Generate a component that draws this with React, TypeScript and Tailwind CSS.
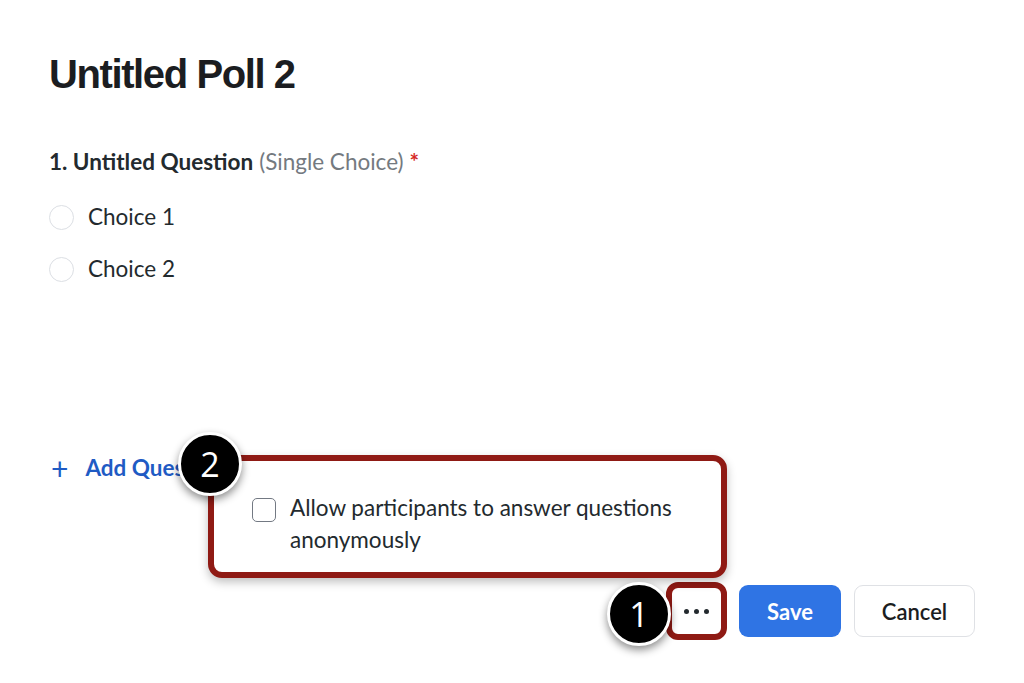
import React from "react";

function Badge({ n, className }: { n: string; className: string }) {
  return (
    <div
      className={
        "absolute flex h-[64px] w-[64px] items-center justify-center rounded-full border-[3px] border-white bg-black text-[34px] font-medium leading-none text-white shadow-[0_4px_8px_rgba(0,0,0,0.45)] " +
        className
      }
      style={{ fontFamily: "'Open Sans', Roboto, sans-serif" }}
    >
      {n}
    </div>
  );
}

function Radio({ label }: { label: string }) {
  return (
    <div className="flex h-[52px] items-center">
      <span className="h-[25px] w-[25px] rounded-full border-[1.5px] border-[#dcdfe4] bg-white" />
      <span className="ml-[14px] text-[22.5px] text-[#232a2e]">{label}</span>
    </div>
  );
}

export default function App() {
  return (
    <div
      className="relative h-[683px] w-[1024px] overflow-hidden bg-white"
      style={{ fontFamily: "Lato, 'Open Sans', sans-serif" }}
    >
      <div className="flex flex-col pl-[49px] pt-[50px]">
        <h1
          className="text-[40px] font-bold leading-[48px] tracking-[-1.4px] text-[#1b1d21]"
          style={{ fontFamily: "'Liberation Sans', Arial, sans-serif" }}
        >
          Untitled Poll 2
        </h1>

        <div className="mt-[50px] flex items-center text-[22.5px] leading-[28px]">
          <span className="font-bold text-[#232a2e]">1. Untitled Question</span>
          <span className="ml-[6px] text-[#747a80]">(Single Choice)</span>
          <span className="ml-[6px] font-bold text-[#d62a23]">*</span>
        </div>

        <div className="mt-[15px] flex flex-col">
          <Radio label="Choice 1" />
          <Radio label="Choice 2" />
        </div>

        <div className="mt-[158px] flex items-center text-[22.5px] font-bold leading-[28px] text-[#1f5bc4]">
          <span className="ml-[2px] text-[30px] font-normal leading-none">+</span>
          <span className="ml-[17px]">Add Question</span>
        </div>
      </div>

      {/* bottom buttons */}
      <div className="absolute bottom-[43px] right-[49px] flex items-center">
        <div className="flex h-[58px] w-[61px] items-center justify-center gap-[5px] rounded-[12px] border-[6px] border-[#8f1a14] bg-white">
          <span className="h-[5px] w-[5px] rounded-full bg-[#232a2e]" />
          <span className="h-[5px] w-[5px] rounded-full bg-[#232a2e]" />
          <span className="h-[5px] w-[5px] rounded-full bg-[#232a2e]" />
        </div>
        <button className="ml-[12px] flex h-[52px] w-[102px] items-center justify-center rounded-[9px] bg-[#2f74e4] text-[22px] font-bold text-white">
          Save
        </button>
        <button className="ml-[13px] flex h-[52px] w-[121px] items-center justify-center rounded-[9px] border border-[#dfe1e5] bg-white text-[22px] font-semibold text-[#1b1d21]">
          Cancel
        </button>
      </div>

      {/* annotated popup */}
      <div className="absolute left-[208px] top-[455px] h-[123px] w-[519px] rounded-[14px] border-[6px] border-[#8f1a14] bg-white shadow-[0_4px_10px_rgba(0,0,0,0.25)]">
        <div className="flex pl-[38px] pt-[36px]">
          <span className="mt-[1px] h-[24px] w-[24px] shrink-0 rounded-[5px] border-[1.5px] border-[#737983] bg-white" />
          <p className="ml-[14px] -mt-[5px] text-[22.5px] leading-[32px] text-[#232a2e]">
            Allow participants to answer questions
            <br />
            anonymously
          </p>
        </div>
      </div>

      <Badge n="2" className="left-[178px] top-[432px]" />
      <Badge n="1" className="left-[607px] top-[582px]" />
    </div>
  );
}
